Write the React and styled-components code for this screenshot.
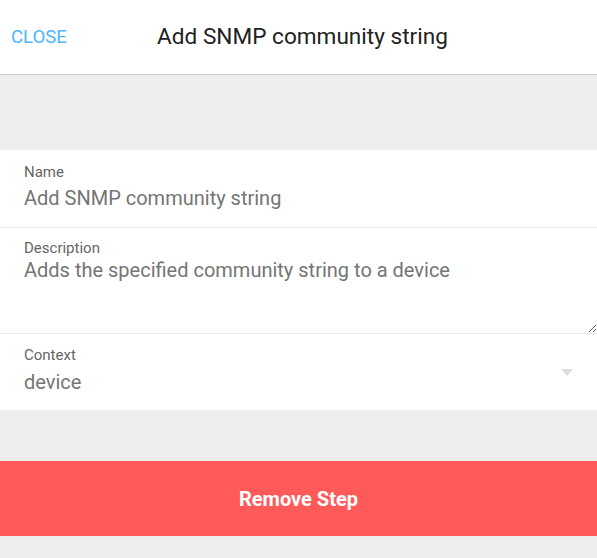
import styled, { createGlobalStyle } from 'styled-components';

const Global = createGlobalStyle`
  html, body { margin: 0; padding: 0; background: #eeeeee; }
  body { font-family: Roboto, "Liberation Sans", sans-serif; }
  * { box-sizing: border-box; }
`;

const Page = styled.div`
  width: 597px;
  min-height: 558px;
  background: #eeeeee;
  display: flex;
  flex-direction: column;
`;

const Header = styled.header`
  height: 75px;
  background: #fff;
  border-bottom: 1px solid #cccccc;
  display: grid;
  grid-template-columns: 1fr auto 1fr;
  align-items: center;
  padding: 0 11px;
`;

const CloseBtn = styled.button`
  justify-self: start;
  border: 0;
  background: none;
  padding: 0;
  font-family: Roboto, sans-serif;
  font-size: 18.6px;
  color: #4db6ff;
  text-transform: uppercase;
  cursor: pointer;
`;

const Title = styled.h1`
  margin: -2px 0 0 8px;
  font-size: 22.6px;
  font-weight: 400;
  color: #222;
`;

const Spacer = styled.div`
  height: 75px;
`;

const Form = styled.div`
  background: #fff;
  display: flex;
  flex-direction: column;
`;

const Field = styled.label`
  display: flex;
  flex-direction: column;
  padding: ${p => p.$pad || '13px 24px 0'};
  height: ${p => p.$h}px;
  border-top: ${p => (p.$first ? '0' : '1px solid #e8e8e8')};
`;

const Label = styled.span`
  font-size: 15px;
  line-height: 17px;
  color: #666;
`;

const Input = styled.input`
  border: 0;
  outline: none;
  padding: 0;
  margin-top: 5px;
  font-family: Roboto, sans-serif;
  font-size: 20px;
  color: #757575;
  background: none;
`;

const TextArea = styled.textarea`
  border: 0;
  outline: none;
  padding: 0;
  margin: 0 -24px 0 0;
  flex: 1;
  font-family: Roboto, sans-serif;
  font-size: 20px;
  line-height: 26px;
  color: #757575;
  resize: vertical;
  background: none;
`;

const Select = styled.div`
  display: flex;
  justify-content: space-between;
  align-items: center;
  margin-top: 6px;
  font-size: 20px;
  color: #757575;
`;

const Caret = styled.span`
  width: 0;
  height: 0;
  border-left: 6px solid transparent;
  border-right: 6px solid transparent;
  border-top: 7px solid #dddddd;
  margin-top: -20px;
`;

const Gap = styled.div`
  height: 51px;
`;

const RemoveButton = styled.button`
  height: 75px;
  width: 100%;
  border: 0;
  background: #ff5a5a;
  color: #fff;
  font-family: Roboto, sans-serif;
  font-size: 20px;
  font-weight: 700;
  cursor: pointer;
`;

export default function App() {
  return (
    <Page>
      <Global />
      <Header>
        <CloseBtn>Close</CloseBtn>
        <Title>Add SNMP community string</Title>
        <div />
      </Header>
      <Spacer />
      <Form>
        <Field $first $h={77} $pad="14px 24px 0">
          <Label>Name</Label>
          <Input defaultValue="Add SNMP community string" />
        </Field>
        <Field $h={106} $pad="12px 24px 0">
          <Label>Description</Label>
          <TextArea defaultValue="Adds the specified community string to a device" />
        </Field>
        <Field $h={77} $pad="13px 24px 0">
          <Label>Context</Label>
          <Select>
            <span>device</span>
            <Caret />
          </Select>
        </Field>
      </Form>
      <Gap />
      <RemoveButton>Remove Step</RemoveButton>
    </Page>
  );
}
